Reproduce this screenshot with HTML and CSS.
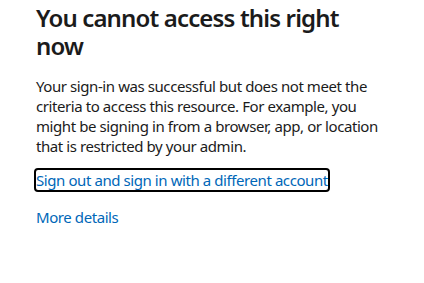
FILE: index.html
```html
<!DOCTYPE html>
<html lang="en">
<head>
<meta charset="utf-8">
<link rel="stylesheet" href="styles.css">
</head>
<body>
<main class="page">
  <h1 class="title">You cannot access this right now</h1>
  <p class="desc">Your sign-in was successful but does not meet the criteria to access this resource. For example, you might be signing in from a browser, app, or location that is restricted by your admin.</p>
  <div class="links">
    <a class="link focused" href="#">Sign out and sign in with a different account</a>
    <a class="link" href="#">More details</a>
  </div>
</main>
</body>
</html>
```
FILE: styles.css
```css
html, body {
  margin: 0;
  padding: 0;
  background: #ffffff;
}
body {
  font-family: "Noto Sans", "Open Sans", sans-serif;
  color: #1b1b1b;
}
.page {
  padding: 4px 0 0 36px;
  width: 350px;
}
.title {
  margin: 0;
  width: 340px;
  font-size: 24px;
  line-height: 28px;
  font-weight: 600;
  letter-spacing: -0.85px;
  color: #1b1b1b;
}
.desc {
  margin: 16px 0 0 0;
  font-size: 15px;
  line-height: 20px;
  letter-spacing: -0.42px;
  color: #1b1b1b;
}
.links {
  display: flex;
  flex-direction: column;
  align-items: flex-start;
  gap: 17px;
  margin-top: 14px;
}
.link {
  font-size: 15px;
  line-height: 20px;
  letter-spacing: -0.42px;
  color: #0067b8;
  text-decoration: none;
}
.focused {
  outline: 2px solid #000;
  outline-offset: 0;
  border-radius: 2px;
}
```
